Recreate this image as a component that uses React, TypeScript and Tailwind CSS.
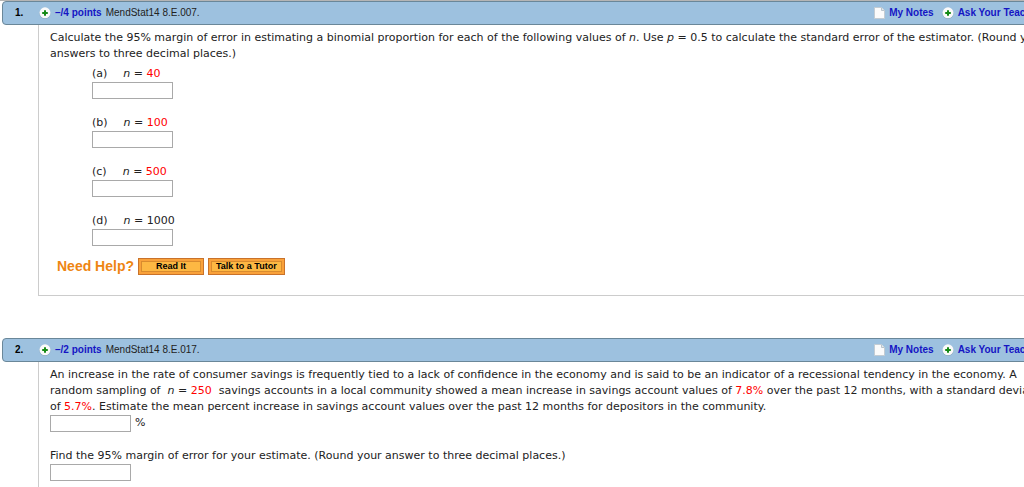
import { useId, type ReactNode } from 'react';

interface QuestionProps {
  number: number;
  points: string;
  source: string;
  children: ReactNode;
}

function PlusIcon() {
  return (
    <svg className="size-3 shrink-0" viewBox="0 0 12 12" aria-hidden="true">
      <circle cx="6" cy="6.4" r="5.5" fill="#86a3b8" />
      <circle cx="6" cy="5.8" r="5.5" fill="#fafafa" />
      <path d="M6 3.2v5.6M3.2 6h5.6" stroke="#168a16" strokeWidth="2" />
    </svg>
  );
}

function NoteIcon() {
  return (
    <svg className="h-3 w-[11px] shrink-0" viewBox="0 0 11 12" aria-hidden="true">
      <path d="M.5.5h7l3 3v8H.5z" fill="#fbfbfb" stroke="#c3ccd3" />
      <path d="M7.5.5v3h3" fill="#e4e9ec" stroke="#b9c4cc" />
    </svg>
  );
}

function Question({ number, points, source, children }: QuestionProps) {
  return (
    <section>
      <header className="ml-0.5 flex h-6 items-center rounded-l-[4px] border border-[#6a8799] bg-[#9dc1df] pr-7 font-['Liberation_Sans',Arial,sans-serif] text-[10px] leading-4">
        <span className="w-9 pl-3 font-bold text-black">{number}.</span>
        <a href="#points" className="flex items-center gap-1 font-bold text-[#1515c4]">
          <PlusIcon />
          {points}
        </a>
        <span className="ml-1 text-[#222]">{source}</span>
        <div className="ml-auto flex items-center gap-2 font-bold text-[#1515c4]">
          <a href="#notes" className="flex items-center gap-1">
            <NoteIcon />
            My Notes
          </a>
          <a href="#ask" className="flex items-center gap-1">
            <PlusIcon />
            Ask Your Teacher
          </a>
        </div>
      </header>
      <div className="ml-[38px] border-b border-l border-[#ccc] pt-[5px] pl-[11px]">{children}</div>
    </section>
  );
}

function AnswerBox({ id, label }: { id?: string; label?: string }) {
  return (
    <input
      id={id}
      type="text"
      aria-label={label}
      className="block h-[17px] w-[81px] border border-[#a9a9a9] bg-white px-0.5"
    />
  );
}

function Part({ letter, value, given }: { letter: string; value: string; given?: boolean }) {
  const id = useId();

  return (
    <div>
      <label htmlFor={id} className="flex gap-4">
        <span>({letter})</span>
        <span>
          <i>n</i> = <span className={given ? undefined : 'text-[#f00]'}>{value}</span>
        </span>
      </label>
      <AnswerBox id={id} />
    </div>
  );
}

function HelpButton({ children }: { children: ReactNode }) {
  return (
    <button
      type="button"
      className="h-[17px] border border-[#c9722a] bg-[#f9a13a] p-0.5 text-[9px] leading-[9px] font-bold text-black"
    >
      <span className="flex h-full min-w-[60px] items-center justify-center border border-[#d98b2e] bg-[#fdb843] px-1">
        {children}
      </span>
    </button>
  );
}

export default function App() {
  return (
    <div className="overflow-x-hidden border-t border-[#b5b5b5] bg-white font-['DejaVu_Sans',Verdana,sans-serif] text-[11px] leading-4 text-[#222]">
      <main className="w-full min-w-[1070px] whitespace-nowrap">
        <Question number={1} points="–/4 points" source="MendStat14 8.E.007.">
          <p>
            Calculate the 95% margin of error in estimating a binomial proportion for each of the following values of{' '}
            <i>n</i>. Use <i>p</i> = 0.5 to calculate the standard error of the estimator. (Round your
            <br />
            answers to three decimal places.)
          </p>
          <div className="mt-1 ml-[42px] space-y-4">
            <Part letter="a" value="40" />
            <Part letter="b" value="100" />
            <Part letter="c" value="500" />
            <Part letter="d" value="1000" given />
          </div>
          <div className="mt-2 flex items-center gap-1 pb-[17px] pl-[7px] font-['Liberation_Sans',Arial,sans-serif]">
            <span className="text-[14px] leading-6 font-bold text-[#ee8512]">Need Help?</span>
            <HelpButton>Read It</HelpButton>
            <HelpButton>Talk to a Tutor</HelpButton>
          </div>
        </Question>

        <div className="h-[42px]" />

        <Question number={2} points="–/2 points" source="MendStat14 8.E.017.">
          <p>
            An increase in the rate of consumer savings is frequently tied to a lack of confidence in the economy and is
            said to be an indicator of a recessional tendency in the economy. A
            <br />
            random sampling of &nbsp;<i>n</i> = <span className="text-[#f00]">250</span>&nbsp; savings accounts in a
            local community showed a mean increase in savings account values of{' '}
            <span className="text-[#f00]">7.8%</span> over the past 12 months, with a standard deviation
            <br />
            of <span className="text-[#f00]">5.7%</span>. Estimate the mean percent increase in savings account values
            over the past 12 months for depositors in the community.
          </p>
          <div className="flex gap-1">
            <AnswerBox label="Mean percent increase" />
            <span>%</span>
          </div>
          <label htmlFor="margin" className="mt-4 block">
            Find the 95% margin of error for your estimate. (Round your answer to three decimal places.)
          </label>
          <AnswerBox id="margin" />
          <div className="h-4" />
        </Question>
      </main>
    </div>
  );
}
